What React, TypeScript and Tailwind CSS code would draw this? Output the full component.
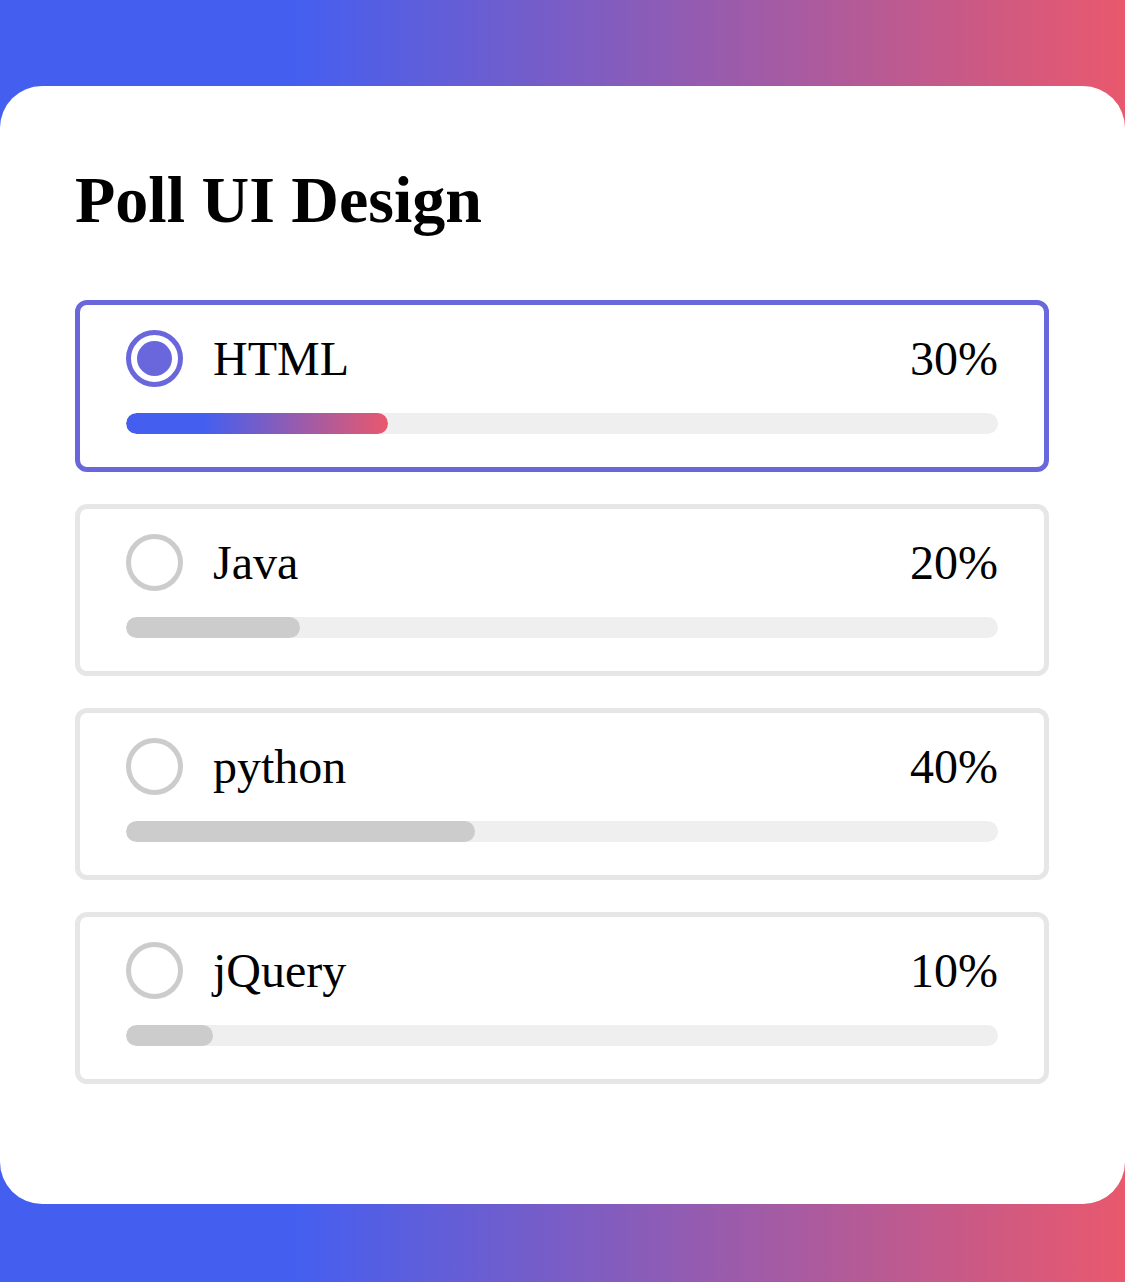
import React, { useState } from "react";

type Option = { id: string; label: string; percent: number };

const options: Option[] = [
  { id: "html", label: "HTML", percent: 30 },
  { id: "java", label: "Java", percent: 20 },
  { id: "python", label: "python", percent: 40 },
  { id: "jquery", label: "jQuery", percent: 10 },
];

const PollOption: React.FC<{ option: Option; selected: boolean; onSelect: () => void }> = ({
  option,
  selected,
  onSelect,
}) => {
  return (
    <label
      onClick={onSelect}
      className={`block cursor-pointer rounded-[12px] border-[5px] px-[46px] pt-[25px] pb-[33px] ${
        selected ? "border-[#6a66dc]" : "border-[#e6e6e6]"
      }`}
    >
      <div className="flex h-[57px] items-center">
        <span
          className={`flex h-[57px] w-[57px] shrink-0 items-center justify-center rounded-full border-[5px] ${
            selected ? "border-[#6a66dc]" : "border-[#cccccc]"
          }`}
        >
          {selected && <span className="h-[35px] w-[35px] rounded-full bg-[#6a66dc]" />}
        </span>
        <span className="ml-[30px] text-[48px] leading-none text-black">{option.label}</span>
        <span className="ml-auto text-[48px] leading-none text-black">{option.percent}%</span>
      </div>
      <div className="mt-[26px] h-[21px] w-full overflow-hidden rounded-full bg-[#efefef]">
        <div
          className={`h-full rounded-full ${
            selected ? "bg-[linear-gradient(to_right,#445ff0_30%,#e9586d)]" : "bg-[#cccccc]"
          }`}
          style={{ width: `${option.percent}%` }}
        />
      </div>
    </label>
  );
};

const App: React.FC = () => {
  // only one answer can be picked
  const [selectedId, setSelectedId] = useState("html");

  return (
    <div className="min-h-[1282px] w-full bg-[linear-gradient(to_right,#445ff0_26%,#e9586d)] pt-[86px] pb-[78px] font-['Liberation_Serif','Times_New_Roman',serif]">
      <div className="rounded-[42px] bg-white pl-[75px] pr-[76px] pt-[81px] pb-[120px]">
        <h1 className="text-[66px] leading-none font-bold text-black">Poll UI Design</h1>
        <div className="mt-[67px] flex flex-col gap-[32px]">
          {options.map((opt) => (
            <PollOption
              key={opt.id}
              option={opt}
              selected={selectedId === opt.id}
              onSelect={() => setSelectedId(opt.id)}
            />
          ))}
        </div>
      </div>
    </div>
  );
};

export default App;
